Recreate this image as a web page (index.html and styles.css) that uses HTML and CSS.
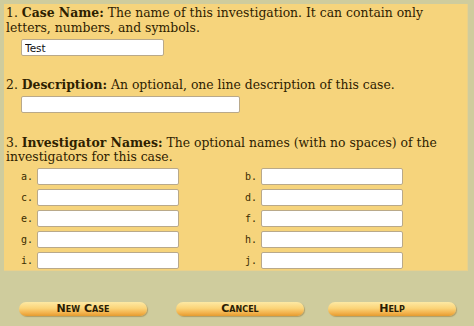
FILE: index.html
```html
<!DOCTYPE html>
<html>
<head>
<meta charset="utf-8">
<link rel="stylesheet" href="styles.css">
</head>
<body>
<div class="panel">
  <p class="q q1">1. <b>Case Name:</b> The name of this investigation. It can contain only letters, numbers, and symbols.</p>
  <div class="field f1"><input class="inp short" type="text" value="Test"></div>
  <p class="q q2">2. <b>Description:</b> An optional, one line description of this case.</p>
  <div class="field f2"><input class="inp long" type="text"></div>
  <p class="q q3">3. <b>Investigator Names:</b> The optional names (with no spaces) of the investigators for this case.</p>
  <div class="names">
    <div class="cell"><span class="lbl">a.</span><input class="inp nm" type="text"></div>
    <div class="cell"><span class="lbl">b.</span><input class="inp nm" type="text"></div>
    <div class="cell"><span class="lbl">c.</span><input class="inp nm" type="text"></div>
    <div class="cell"><span class="lbl">d.</span><input class="inp nm" type="text"></div>
    <div class="cell"><span class="lbl">e.</span><input class="inp nm" type="text"></div>
    <div class="cell"><span class="lbl">f.</span><input class="inp nm" type="text"></div>
    <div class="cell"><span class="lbl">g.</span><input class="inp nm" type="text"></div>
    <div class="cell"><span class="lbl">h.</span><input class="inp nm" type="text"></div>
    <div class="cell"><span class="lbl">i.</span><input class="inp nm" type="text"></div>
    <div class="cell"><span class="lbl">j.</span><input class="inp nm" type="text"></div>
  </div>
</div>
<div class="buttons">
  <button class="btn b1">New Case</button>
  <button class="btn b2">Cancel</button>
  <button class="btn b3">Help</button>
</div>
</body>
</html>
```
FILE: styles.css
```css
html, body {
  margin: 0;
  padding: 0;
}
body {
  background: #cfcc9d;
  width: 474px;
  height: 326px;
  overflow: hidden;
  font-family: "DejaVu Serif", serif;
  color: #2e2100;
}
.panel {
  margin: 4px 6px 0 4px;
  height: 267px;
  background: #f6d47c;
  padding: 0 0 0 2px;
  box-sizing: border-box;
  border-right: 1px solid #ead08a;
  border-bottom: 1px solid #ead08a;
}
.q {
  margin: 0;
  font-size: 12.4px;
  line-height: 14.5px;
}
.q1 { padding-top: 2px; }
.q2 { padding-top: 22px; }
.q3 { padding-top: 22.5px; }
.field {
  display: flex;
  padding-left: 15px;
}
.f1 { padding-top: 4px; }
.f2 { padding-top: 3.5px; }
.inp {
  box-sizing: border-box;
  height: 17px;
  border: 1px solid #b9a98a;
  border-radius: 2px;
  background: #fff;
  margin: 0;
  padding: 0 3px;
  font-family: "DejaVu Sans", sans-serif;
  font-size: 10.5px;
  color: #111;
  outline: none;
}
.short { width: 143px; }
.long { width: 219px; }
.nm { width: 142px; }
.names {
  display: grid;
  grid-template-columns: 224px 224px;
  row-gap: 4px;
  padding: 3px 0 0 15px;
}
.cell {
  display: flex;
  align-items: center;
}
.lbl {
  font-family: "DejaVu Sans Mono", monospace;
  font-size: 10px;
  width: 16px;
  padding-left: 0;
  box-sizing: border-box;
  color: #3a2c00;
}
.buttons {
  display: flex;
  padding: 31px 0 0 19px;
}
.btn {
  width: 128px;
  height: 14px;
  padding: 0;
  border: none;
  border-radius: 7px;
  background: linear-gradient(to bottom, #fde9a4 0%, #fbd478 45%, #f2b04a 80%, #e39b30 100%);
  box-shadow: 1px 1px 1px rgba(150,120,60,0.55);
  font-family: "DejaVu Sans", sans-serif;
  font-weight: bold;
  font-variant: small-caps;
  font-size: 11px;
  line-height: 14px;
  color: #2a1d05;
}
.b2 { margin-left: 29px; }
.b3 { margin-left: 24px; }
```
